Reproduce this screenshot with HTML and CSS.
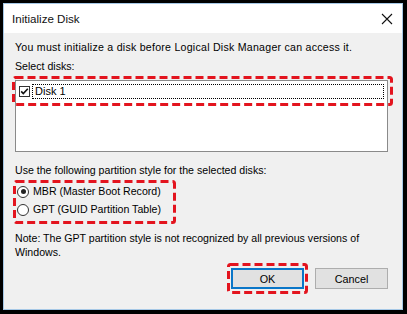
FILE: index.html
```html
<!DOCTYPE html>
<html>
<head>
<meta charset="utf-8">
<link rel="stylesheet" href="styles.css">
</head>
<body>
<div class="window">
  <div class="titlebar">
    <span class="title">Initialize Disk</span>
    <svg class="close" width="12" height="12" viewBox="0 0 12 12"><path d="M1 1L11 11M11 1L1 11" stroke="#111" stroke-width="1.1" fill="none"/></svg>
  </div>
  <div class="content">
    <p class="line intro">You must initialize a disk before Logical Disk Manager can access it.</p>
    <p class="line sel">Select disks:</p>
    <div class="listbox">
      <div class="row">
        <svg class="check" width="11" height="11" viewBox="0 0 11 11"><rect x="0.5" y="0.5" width="10" height="10" fill="#fff" stroke="#333"/><path d="M2.2 5.4L4.3 7.6L8.8 2.8" stroke="#111" stroke-width="1.6" fill="none"/></svg>
        <span class="item">Disk 1</span>
        <svg class="mark mark-disk"><rect x="1.5" y="1.5" width="calc(100% - 3px)" height="calc(100% - 3px)" rx="2" /></svg>
      </div>
    </div>
    <p class="line part">Use the following partition style for the selected disks:</p>
    <div class="radios">
      <div class="radio"><span class="dot on"></span>MBR (Master Boot Record)</div>
      <div class="radio"><span class="dot"></span>GPT (GUID Partition Table)</div>
      <svg class="mark mark-radio"><rect x="1.5" y="1.5" width="calc(100% - 3px)" height="calc(100% - 3px)" rx="2" /></svg>
    </div>
    <p class="line note">Note: The GPT partition style is not recognized by all previous versions of Windows.</p>
    <div class="buttons">
      <div class="okwrap">
        <button class="btn ok">OK</button>
        <svg class="mark mark-ok"><rect x="1.5" y="1.5" width="calc(100% - 3px)" height="calc(100% - 3px)" rx="2" /></svg>
      </div>
      <button class="btn">Cancel</button>
    </div>
  </div>
</div>
</body>
</html>
```
FILE: styles.css
```css
html, body {
  margin: 0;
  padding: 0;
  background: #000;
  width: 407px;
  height: 314px;
  overflow: hidden;
}
body {
  padding-top: 3px;
  padding-left: 3px;
  box-sizing: border-box;
  font-family: "Liberation Sans", Arial, sans-serif;
  font-size: 10.6px;
  color: #000;
}
.window {
  width: 400px;
  height: 307px;
  box-sizing: border-box;
  border: 1px solid #a6c8e6;
  background: #f0f0f0;
  display: flex;
  flex-direction: column;
}
.titlebar {
  height: 29px;
  background: #fff;
  display: flex;
  align-items: center;
  justify-content: space-between;
  padding: 0 9px 0 8px;
  flex: none;
}
.title {
  font-size: 11.6px;
  color: #111;
}
.close {
  display: block;
}
.content {
  padding: 7px 14px 0 11px;
  display: flex;
  flex-direction: column;
}
.line {
  margin: 0;
  line-height: 15px;
}
.intro {
  letter-spacing: 0.25px;
}
.sel {
  margin-top: 4px;
}
.listbox {
  margin-top: 6px;
  height: 72px;
  box-sizing: border-box;
  border: 1px solid #8a8a8a;
  background: #fff;
  padding: 3px 3px 0 3px;
}
.row {
  position: relative;
  display: flex;
  align-items: center;
  height: 15px;
}
.check {
  display: block;
  flex: none;
}
.item {
  flex: 1;
  margin-left: 2px;
  border: 1px dotted #000;
  line-height: 13px;
  padding-left: 2px;
  font-size: 11px;
}
.mark {
  position: absolute;
  overflow: visible;
  pointer-events: none;
}
.mark rect {
  fill: none;
  stroke: #e3141e;
  stroke-width: 3;
  stroke-dasharray: 8 4;
}
.mark-disk {
  left: -7px;
  top: -8px;
  width: 381px;
  height: 30px;
}
.part {
  margin-top: 11px;
}
.radios {
  position: relative;
  margin-top: 6px;
  display: flex;
  flex-direction: column;
  gap: 3px;
}
.radio {
  display: flex;
  align-items: center;
  height: 15px;
  line-height: 15px;
}
.dot {
  width: 12px;
  height: 12px;
  border: 1px solid #333;
  border-radius: 50%;
  background: #fff;
  margin-left: 2px;
  margin-right: 4px;
  box-sizing: border-box;
  position: relative;
  flex: none;
}
.dot.on::after {
  content: "";
  position: absolute;
  left: 2.5px;
  top: 2.5px;
  width: 5px;
  height: 5px;
  border-radius: 50%;
  background: #222;
}
.mark-radio {
  left: -2px;
  top: -4px;
  width: 163px;
  height: 44px;
}
.note {
  margin-top: 14px;
  width: 352px;
  line-height: 14px;
}
.buttons {
  margin-top: 9px;
  display: flex;
  justify-content: flex-end;
  gap: 11px;
}
.okwrap {
  position: relative;
}
.btn {
  width: 73px;
  height: 21px;
  box-sizing: border-box;
  border: 1px solid #adadad;
  background: #e1e1e1;
  font-family: "Liberation Sans", Arial, sans-serif;
  font-size: 10.8px;
  padding: 0;
  color: #000;
  display: block;
}
.btn.ok {
  border: 2px solid #0a76c8;
}
.mark-ok {
  left: -4px;
  top: -5px;
  width: 81px;
  height: 31px;
}
```
